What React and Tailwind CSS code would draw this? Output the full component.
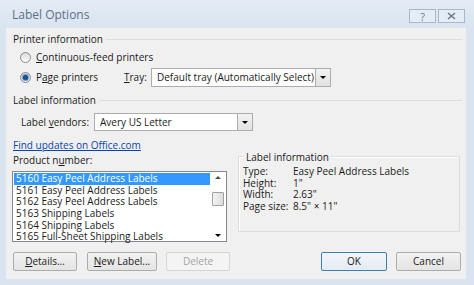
import React from 'react';

const Mn = ({ children }) => <span className="underline underline-offset-1">{children}</span>;

const SectionHeader = ({ title }) => (
  <div className="flex items-center h-[14px] gap-[3px]">
    <span>{title}</span>
    <div className="flex-1 h-px bg-[#dcdcdc] mr-[4px]" />
  </div>
);

const Radio = ({ checked }) => (
  <div className="w-[11px] h-[11px] rounded-full border border-[#8a8a8a] bg-gradient-to-b from-[#dcdcdc] to-[#fafafa] flex items-center justify-center shrink-0">
    {checked && <div className="w-[5px] h-[5px] rounded-full bg-[#1f4f8f] shadow-[0_0_1px_1px_#5b8fd0]" />}
  </div>
);

const Arrow = () => (
  <div className="w-0 h-0 border-l-[3px] border-r-[3px] border-t-[3px] border-l-transparent border-r-transparent border-t-black" />
);

const Select = ({ value, width }) => (
  <div className="flex h-full" style={{ width }}>
    <div className="flex-1 bg-white border border-[#abadb3] flex items-center pl-[5px]">{value}</div>
    <div className="w-[15px] border border-l-0 border-[#acacac] bg-gradient-to-b from-[#f2f2f2] to-[#e2e2e2] flex items-center justify-center">
      <Arrow />
    </div>
  </div>
);

const Button = ({ children, w, variant }) => {
  const cls =
    variant === 'default'
      ? 'border-[#3c7fb1] bg-gradient-to-b from-[#f2f6fa] to-[#e3ebf3]'
      : variant === 'disabled'
      ? 'border-[#d5d5d5] bg-[#f4f4f4] text-[#a3a3a3]'
      : 'border-[#acacac] bg-gradient-to-b from-[#f2f2f2] to-[#e4e4e4]';
  return (
    <div className={`h-[19px] border rounded-[2px] flex items-center justify-center ${cls}`} style={{ width: w }}>
      {children}
    </div>
  );
};

const products = [
  '5160 Easy Peel Address Labels',
  '5161 Easy Peel Address Labels',
  '5162 Easy Peel Address Labels',
  '5163 Shipping Labels',
  '5164 Shipping Labels',
  '5165 Full-Sheet Shipping Labels',
];

const info = [
  ['Type:', 'Easy Peel Address Labels'],
  ['Height:', '1"'],
  ['Width:', '2.63"'],
  ['Page size:', '8.5" \u00d7 11"'],
];

export default function App() {
  return (
    <div className="w-[474px] h-[285px] bg-[#d9e4f0] flex flex-col font-['Segoe_UI','Open_Sans',sans-serif] text-[10px] leading-[11px] text-[#1a1a1a] overflow-hidden">
      {/* Title bar */}
      <div className="h-[28px] flex items-center justify-between pl-[12px] pr-[9px] bg-gradient-to-b from-[#e3ebf5] to-[#d9e4f0]">
        <span className="text-[12px] text-[#5d6f86]">Label Options</span>
        <div className="flex gap-[2px] mt-[4px]">
          <div className="w-[27px] h-[14px] border border-[#a8b7ca] bg-[#e4ecf5] flex items-center justify-center text-[11px] text-[#6c7c92]">?</div>
          <div className="w-[27px] h-[14px] border border-[#a8b7ca] bg-[#e4ecf5] flex items-center justify-center">
            <svg width="9" height="8" viewBox="0 0 9 8">
              <path d="M1 1 L8 7 M8 1 L1 7" stroke="#6c7c92" strokeWidth="1.6" />
            </svg>
          </div>
        </div>
      </div>

      {/* Content panel */}
      <div className="flex-1 ml-[6px] mr-[8px] mb-[6px] bg-[#f0f0f0] pl-[7px] pt-[4px] flex flex-col">
        <SectionHeader title="Printer information" />

        <div className="mt-[4px] h-[14px] flex items-center pl-[7px] gap-[5px]">
          <Radio />
          <span>
            <Mn>C</Mn>ontinuous-feed printers
          </span>
        </div>

        <div className="mt-[4px] h-[19px] flex items-center pl-[7px]">
          <Radio checked />
          <span className="ml-[5px] w-[88px]">
            P<Mn>a</Mn>ge printers
          </span>
          <span className="w-[27px]">
            <Mn>T</Mn>ray:
          </span>
          <Select value="Default tray (Automatically Select)" width={180} />
        </div>

        <div className="mt-[6px]">
          <SectionHeader title="Label information" />
        </div>

        <div className="mt-[6px] h-[18px] flex items-center pl-[8px]">
          <span className="w-[73px]">
            Label <Mn>v</Mn>endors:
          </span>
          <Select value="Avery US Letter" width={159} />
        </div>

        <div className="mt-[7px] h-[14px] flex items-center">
          <span className="text-[#0645ad] underline underline-offset-1">Find updates on Office.com</span>
        </div>

        <div className="flex mt-[1px]">
          {/* Product list */}
          <div className="flex flex-col">
            <div className="h-[14px] flex items-center">
              Product n<Mn>u</Mn>mber:
            </div>
            <div className="mt-[4px] w-[215px] h-[71px] border border-[#828790] bg-white flex -ml-[1px]">
              <div className="flex-1 pt-[1px] pl-[1px]">
                {products.map((p, i) => (
                  <div
                    key={p}
                    className={`h-[11.6px] flex items-center pl-[2px] ${i === 0 ? 'bg-[#3399ff] text-white' : ''}`}
                  >
                    {p}
                  </div>
                ))}
              </div>
              <div className="w-[16px] flex flex-col items-center justify-between py-[4px]">
                <div className="w-0 h-0 border-l-[3px] border-r-[3px] border-b-[3px] border-l-transparent border-r-transparent border-b-[#505050]" />
                <div className="w-[12px] h-[14px] border border-[#a0a0a0] rounded-[1px] bg-gradient-to-r from-[#f4f4f4] to-[#dcdcdc] -mt-[16px]" />
                <Arrow />
              </div>
            </div>
          </div>

          {/* Label information group */}
          <div className="ml-[11px] mt-[3px] relative w-[222px] h-[76px] border border-[#dcdcdc] shadow-[inset_1px_1px_0_#fff]">
            <span className="absolute -top-[7px] left-[5px] bg-[#f0f0f0] px-[2px] h-[14px] flex items-center">Label information</span>
            <div className="pt-[9px] pl-[4px]">
              {info.map(([k, v]) => (
                <div key={k} className="h-[11.6px] flex items-center">
                  <span className="w-[50px]">{k}</span>
                  <span>{v}</span>
                </div>
              ))}
            </div>
          </div>
        </div>

        <div className="mt-[10px] flex items-center pr-[5px]">
          <Button w={64}>
            <Mn>D</Mn>etails...
          </Button>
          <div className="ml-[10px]">
            <Button w={70}>
              <Mn>N</Mn>ew Label...
            </Button>
          </div>
          <div className="ml-[9px]">
            <Button w={64} variant="disabled">Delete</Button>
          </div>
          <div className="ml-auto">
            <Button w={66} variant="default">OK</Button>
          </div>
          <div className="ml-[9px]">
            <Button w={65}>Cancel</Button>
          </div>
        </div>
      </div>
    </div>
  );
}
